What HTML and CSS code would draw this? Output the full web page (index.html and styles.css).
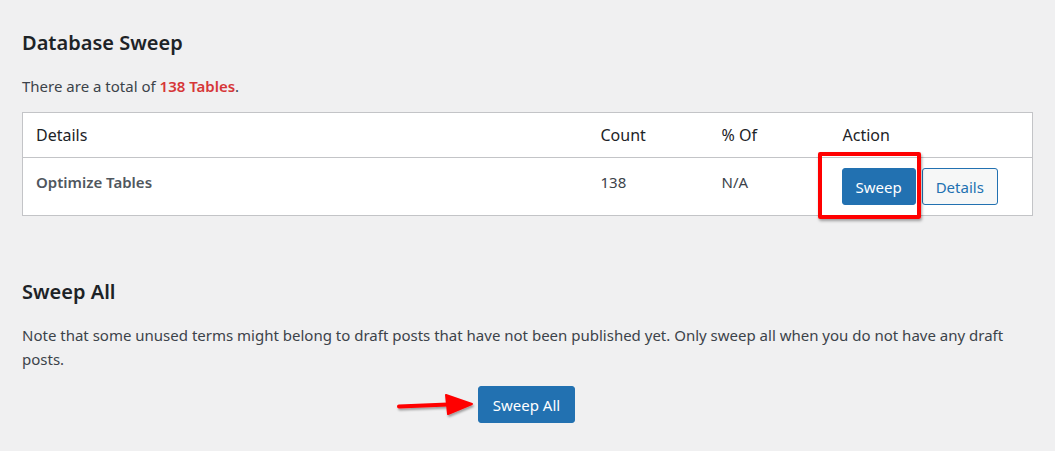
FILE: index.html
```html
<!DOCTYPE html>
<html>
<head>
<meta charset="utf-8">
<link rel="stylesheet" href="styles.css">
</head>
<body>
<div class="wrap">
  <h2 class="title">Database Sweep</h2>
  <p class="text">There are a total of <span class="red">138 Tables</span>.</p>
  <table class="tbl">
    <colgroup><col class="c1"><col class="c2"><col class="c3"><col class="c4"></colgroup>
    <thead>
      <tr class="hrow"><th>Details</th><th>Count</th><th>% Of</th><th>Action</th></tr>
    </thead>
    <tbody>
      <tr class="brow">
        <td class="name">Optimize Tables</td>
        <td class="val">138</td>
        <td class="val">N/A</td>
        <td class="act">
          <div class="btns">
            <span class="hl-wrap"><button class="btn primary">Sweep</button><span class="hl"></span></span>
            <button class="btn secondary">Details</button>
          </div>
        </td>
      </tr>
    </tbody>
  </table>

  <h2 class="title second">Sweep All</h2>
  <p class="text note">Note that some unused terms might belong to draft posts that have not been published yet. Only sweep all when you do not have any draft posts.</p>
  <div class="center">
    <span class="arrow-wrap">
      <svg class="arrow" width="80" height="30" viewBox="0 0 80 30">
        <defs>
          <filter id="sh" x="-20%" y="-50%" width="140%" height="200%">
            <feDropShadow dx="1" dy="2" stdDeviation="1.2" flood-color="#000" flood-opacity="0.35"/>
          </filter>
        </defs>
        <g filter="url(#sh)">
          <path d="M3 15.5 L52 13.5" stroke="#ff0000" stroke-width="4" stroke-linecap="round" fill="none"/>
          <path d="M50 4 L76 13 L52 23 Z" fill="#ff0000" stroke="#ff0000" stroke-width="2" stroke-linejoin="round"/>
        </g>
      </svg>
      <button class="btn primary big">Sweep All</button>
    </span>
  </div>
</div>
</body>
</html>
```

FILE: styles.css
```css
html, body {
  margin: 0;
  padding: 0;
  background: #f0f0f1;
}
body {
  font-family: "Noto Sans", "Open Sans", sans-serif;
  color: #3c434a;
  font-size: 15px;
}
.wrap {
  padding: 0 24px 0 22px;
}
.title {
  margin: 0;
  padding-top: 29px;
  font-size: 20px;
  font-weight: 600;
  color: #1d2327;
  line-height: 28px;
}
.title.second {
  padding-top: 62px;
}
.text {
  margin: 0;
  padding-top: 17px;
  line-height: 24px;
  font-size: 15px;
}
.note {
  padding-top: 17px;
}
.red {
  color: #d63638;
  font-weight: 600;
}
.tbl {
  margin-top: 14px;
  width: 1010px;
  border-collapse: collapse;
  table-layout: fixed;
  background: #fff;
  border: 1px solid #c3c4c7;
}
.c1 { width: 565px; }
.c2 { width: 121px; }
.c3 { width: 121px; }
.c4 { width: 203px; }
.hrow { height: 45px; }
.brow { height: 58px; }
.tbl th {
  text-align: left;
  font-weight: 400;
  font-size: 16px;
  color: #1d2327;
  padding: 0 13px;
  border-bottom: 1px solid #c3c4c7;
}
.tbl td {
  padding: 0 13px;
  vertical-align: top;
}
.tbl td.name, .tbl td.val {
  padding-top: 13px;
  line-height: 22px;
}
.tbl td.name {
  font-weight: 600;
  color: #50575e;
}
.tbl td.act {
  padding-top: 10px;
  padding-left: 12px;
}
.btns {
  display: flex;
  gap: 6px;
}
.btn {
  font-family: inherit;
  font-size: 15px;
  height: 37px;
  padding: 0 13px;
  border-radius: 3px;
  cursor: pointer;
}
.primary {
  background: #2271b1;
  border: 1px solid #2271b1;
  color: #fff;
}
.secondary {
  background: #f6f7f7;
  border: 1px solid #2271b1;
  color: #2271b1;
  padding: 0 13px;
}
.hl-wrap {
  position: relative;
  display: inline-flex;
}
.hl {
  position: absolute;
  left: -24px;
  top: -16px;
  width: 95px;
  height: 59px;
  border: 4px solid #ff0000;
  border-radius: 2px;
  box-shadow: 1px 2px 3px rgba(0,0,0,0.35);
  pointer-events: none;
}
.center {
  display: flex;
  justify-content: center;
  padding-top: 15px;
}
.arrow-wrap {
  position: relative;
  display: inline-flex;
}
.arrow {
  position: absolute;
  left: -82px;
  top: 5px;
}
.big {
  padding: 0 14px;
}
```
